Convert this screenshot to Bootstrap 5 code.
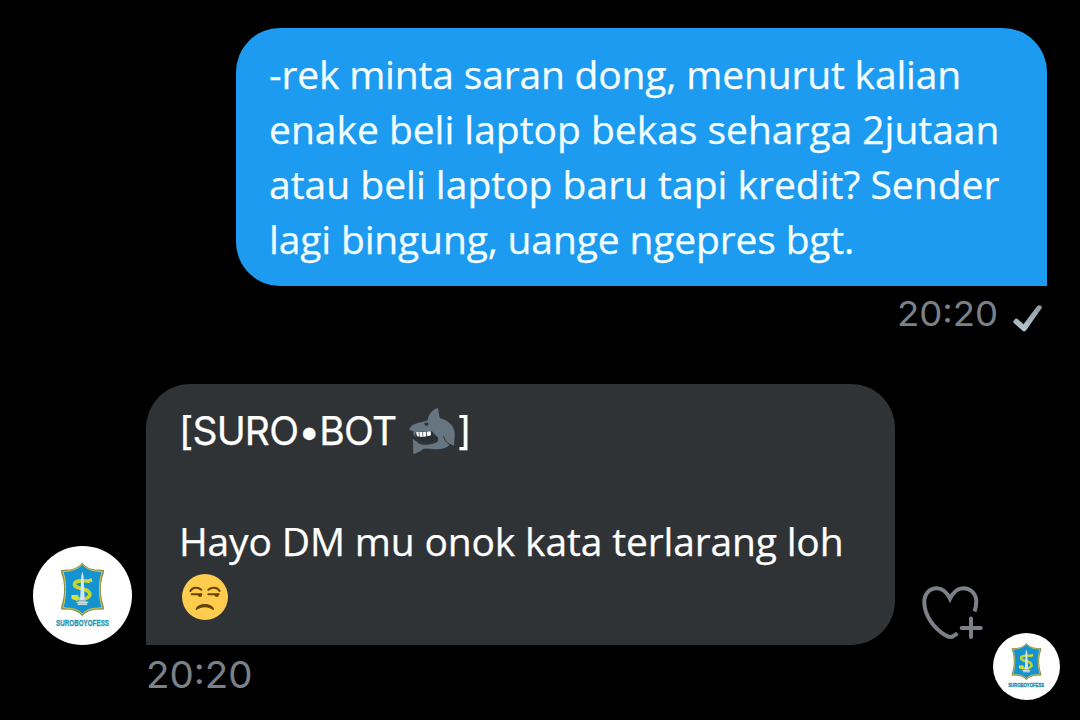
<!DOCTYPE html>
<html lang="id">
<head>
<meta charset="utf-8">
<meta name="viewport" content="width=device-width, initial-scale=1">
<title>Direct message</title>
<link href="https://cdn.jsdelivr.net/npm/bootstrap@5.3.0/dist/css/bootstrap.min.css" rel="stylesheet">
<style>
  body { background: #000; overflow: hidden; font-family: "Open Sans", "Noto Sans", sans-serif; }
  .chat { width: 1080px; height: 720px; padding: 28px 33px 0; }
  .bubble { border-radius: 44px; color: #fff; font-size: 39px; white-space: nowrap; -webkit-text-stroke: .25px currentColor; }
  .bubble-out { background: #1d9bf0; color: #f4feff; width: 811px; height: 258px; padding: 18px 0 0 33px; line-height: 55px; border-bottom-right-radius: 0; }
  .bubble-in { background: #2f3336; width: 749px; height: 261px; padding: 18px 0 0 33px; line-height: 55.5px; border-bottom-left-radius: 0; margin-left: 14px; }
  .row-line { height: 55.5px; }
  .ls-1 { letter-spacing: -.17px; }
  .ls-2 { letter-spacing: -.02px; }
  .ls-3 { letter-spacing: 0; }
  .ls-4 { letter-spacing: -.15px; }
  .ls-6 { letter-spacing: -.16px; }
  .bot-name { font-family: Inter, sans-serif; letter-spacing: -.8px; padding-top: 2px; }
  .stamp { display: inline-block; color: #7c8088; font-family: Inter, sans-serif; font-size: 34px; line-height: 40px; transform: scaleX(1.075); transform-origin: right; }
  .stamp-in { font-size: 37px; transform: scaleX(1.04); transform-origin: left; }
  .sent-meta { margin-top: 8px; height: 40px; padding-right: 5px; }
  .received { margin-top: 50px; }
  .react { margin: 0 0 3px 26px; }
  .footer-row { margin: -12px -13px 0 113px; }
  .footer-row .stamp { margin-bottom: 5px; }
  .shark { margin: 2px 0 0 11px; }
  .face { margin: 2px 0 0 2px; }
</style>
</head>
<body>
<svg class="position-absolute" width="0" height="0" aria-hidden="true">
  <defs>
    <linearGradient id="tick" x1="0" y1="0" x2="0" y2="1"><stop offset="0" stop-color="#8d989f"/><stop offset="1" stop-color="#b9c8d0"/></linearGradient>
  </defs>
  <symbol id="crest" viewBox="0 0 99 99">
    <path d="M49.3 16.5C46 21 39 24 34 23.600L28 24L28.300 27.500C32 36 32 50 28.300 60L28 63.500L34 63.800C40 63.500 46 66 49.300 70.300C52.600 66 59 63.500 65 63.800L71 63.500L70.700 60C67 50 67 36 70.700 27.500L71 24L65 23.600C59 24 52.600 21 49.300 16.500Z" fill="#8b9150"/>
    <path d="M49.300 18.300C45 23 38 25 33.500 25.300L30 25.800C33.500 36 33.500 50 30 61.500L34 62.200C40 62 46 64 49.300 68C52.600 64 59 62 65 62.200L69 61.500C65.500 50 65.500 36 69 25.800L65 25.300C60 25 53.600 23 49.300 18.300Z" fill="#1593d1" stroke="#d5c852" stroke-width="1"/>
    <path d="M57 35.500C51 34 42 34.500 41.500 38C41 41.500 47 42 51 43.300C56.500 45 58.500 48 55.500 51C52 54.300 46 53.800 40.500 50.500" fill="none" stroke="#c8d52c" stroke-width="3.600"/>
    <path d="M53 34.500l5.500-2.500 1 4-3-.5zM38.500 49l7 0-1 6-6-2z" fill="#d8df35"/>
    <path d="M49.300 25.500L50.500 30L51.700 54H47.100L48.300 30Z" fill="#d5e6ee"/>
    <path d="M46 54h6.800l1.200 4.500H44.800z" fill="#9fb6c9"/>
    <path d="M43.500 56.300h11.800M44.500 58.300h9.800" stroke="#e0ebf1" stroke-width="1"/>
  </symbol>
</svg>
<main class="chat d-flex flex-column">
  <section class="bubble bubble-out align-self-end">
    <div class="ls-1">-rek minta saran dong, menurut kalian</div>
    <div class="ls-2">enake beli laptop bekas seharga 2jutaan</div>
    <div class="ls-3">atau beli laptop baru tapi kredit? Sender</div>
    <div class="ls-4">lagi bingung, uange ngepres bgt.</div>
  </section>

  <div class="sent-meta d-flex justify-content-end align-items-center">
    <span class="stamp">20:20</span>
    <svg class="ms-2 overflow-visible" width="36" height="32" viewBox="0 0 36 32" role="img" aria-label="Sent"><path d="M5 17.600L6.800 15.200Q8 14.400 9.200 15.600L15 20.700L28.500 2.800Q30.500 1 32.600 2.300Q33.800 3.300 32.900 5L18 26.300Q15.800 29.300 13.300 26.600L5.300 19.600Q4.300 18.700 5 17.600Z" fill="url(#tick)" transform="translate(2.500 5.500)"/></svg>
  </div>

  <section class="received d-flex align-items-end">
    <svg class="bg-white rounded-circle flex-shrink-0" width="99" height="99" viewBox="0 0 99 99">
      <use href="#crest" width="99" height="99"/>
      <text x="23" y="79.700" font-family="Liberation Sans, sans-serif" font-weight="700" font-size="8.800" textLength="53" lengthAdjust="spacingAndGlyphs" fill="#2494b4" stroke="#2494b4" stroke-width=".3">SUROBOYOFESS</text>
    </svg>
    <div class="bubble bubble-in flex-shrink-0">
      <div class="row-line d-flex align-items-center">
        <span class="bot-name">[SURO•BOT</span>
        <svg class="shark" width="50" height="48" viewBox="710 36 150 144" role="img" aria-label="Shark">
          <path d="M803 39C806 51 805 60 809 70C838 77 856 98 853 124L851 153L840 147C832 158 815 164 792 163C775 162 765 160 757 163C754 169 741 172 730 178C727 168 730 155 727 132C736 136 742 143 748 147C758 151 784 149 797 143C806 138 806 127 797 122L786 110L738 112L734 122L741 129C730 124 727 115 730 109L717 105C719 90 737 84 756 81L772 76C774 57 788 42 803 39Z" fill="#66757f"/>
          <path d="M735 113C750 109 768 111 785 109C789 116 788 122 781 124C796 121 805 127 800 134C791 141 764 144 754 139C747 135 742 132 738 127Z" fill="#292f33"/>
          <path d="M737 112L745 111L746 125L740 123ZM747 111L756 111L757 126L748 125ZM758 111L767 110L768 124L759 126ZM769 110L781 109L782 121L771 124Z" fill="#fff"/>
          <path d="M820 124C822 137 833 147 847 153" stroke="#292f33" stroke-width="3" fill="none"/>
          <path d="M762 84Q768 82 774 84L774 90Q768 95 763 89Z" fill="#292f33"/>
        </svg>
        <span class="bot-name">]</span>
      </div>
      <div class="row-line">&nbsp;</div>
      <div class="row-line ls-6">Hayo DM mu onok kata terlarang loh</div>
      <div class="row-line d-flex align-items-center">
        <svg class="face" width="48" height="48" viewBox="33 24 144 144" role="img" aria-label="Unamused face">
          <circle cx="105" cy="96" r="69" fill="#ffcc4d"/>
          <g fill="none" stroke="#664500" stroke-linecap="round" stroke-linejoin="round" stroke-width="6">
            <path d="M61 78C68 66 84 66 94 74M115 74C125 66 141 66 149 78M65 88H94M115 88H146"/>
          </g>
          <path d="M82 89h14q1 7-5 7-6 0-9-7zM132 89h14q1 7-5 7-6 0-9-7z" fill="#664500"/>
          <path d="M77 132C83 112 126 112 132 132Q133 137 128 134C116 124 93 124 81 134Q76 137 77 132Z" fill="#664500"/>
        </svg>
      </div>
    </div>
    <svg class="react flex-shrink-0" width="64" height="57" viewBox="0 0 64 57" fill="none" stroke="#7c8088" stroke-width="4" role="img" aria-label="React">
      <path d="M53.600 26.500C55 23 55.300 20 55.300 16C55 8 49 3.200 42.500 3.200C36.500 3.200 32 7.500 29 13.700C26 7.500 21.500 3.200 15.500 3.200C8.500 3.200 3.300 9 3.300 17C3.300 31 13.500 43.500 24 50C27.500 52.200 30 52.600 32 51.300L36.500 48.300"/>
      <path d="M50 33.500V52M40.700 43H59.800" stroke-linecap="round"/>
    </svg>
  </section>

  <div class="footer-row d-flex justify-content-between align-items-end">
    <span class="stamp stamp-in">20:20</span>
    <svg class="bg-white rounded-circle" width="67" height="67" viewBox="1 2 97 97">
      <use href="#crest" width="99" height="99"/>
      <text x="23" y="79.500" font-family="Liberation Sans, sans-serif" font-weight="700" font-size="8.800" textLength="52" lengthAdjust="spacingAndGlyphs" fill="#167fa6" stroke="#167fa6" stroke-width=".4">SUROBOYOFESS</text>
    </svg>
  </div>
</main>
<script src="https://cdn.jsdelivr.net/npm/bootstrap@5.3.0/dist/js/bootstrap.bundle.min.js"></script>
</body>
</html>
